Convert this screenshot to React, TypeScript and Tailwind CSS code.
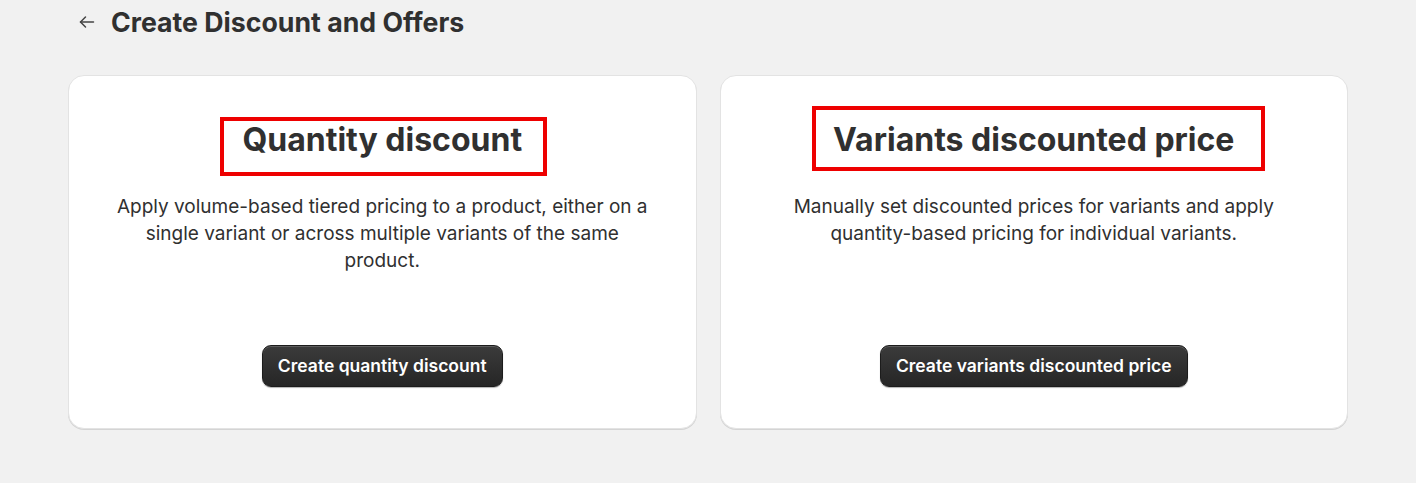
import React from "react";

function Card({ title, desc, button, box }: { title: string; desc: string; button: string; box: string }) {
  return (
    <div className="relative flex h-[354px] flex-col items-center rounded-[16px] border border-[#e3e3e3] bg-white px-[44px] pb-[41px] pt-[44px] shadow-[0_1px_0_#d4d4d4]">
      <div className="relative">
        <h2 className="text-[32px] font-bold leading-[40px] text-[#303030]">{title}</h2>
        <div className={"pointer-events-none absolute border-[4px] border-[#ee0000] " + box} />
      </div>
      <p className="mt-[33px] text-center text-[19px] leading-[27px] text-[#303030]">{desc}</p>
      <button className="mt-auto h-[42px] rounded-[9px] border border-[#1c1c1c] bg-gradient-to-b from-[#3b3b3b] to-[#262626] px-[15px] text-[17.5px] font-semibold text-white shadow-[inset_0_1px_0_rgba(255,255,255,0.18),0_1px_1px_rgba(0,0,0,0.3)]">
        {button}
      </button>
    </div>
  );
}

export default function App() {
  return (
    <div className="min-h-[483px] bg-[#f1f1f1] px-[68px] pt-[5px]" style={{ fontFamily: "Inter, 'Noto Sans', sans-serif" }}>
      <div className="flex h-[34px] items-center gap-[14px] pl-[9px]">
        <svg width="20" height="20" viewBox="0 0 20 20" fill="none" stroke="#444444" strokeWidth="1.5" strokeLinecap="round" strokeLinejoin="round">
          <path d="M16.5 10H3.5" />
          <path d="M8.5 5L3.5 10l5 5" />
        </svg>
        <h1 className="text-[26.7px] font-bold text-[#303030]">Create Discount and Offers</h1>
      </div>
      <div className="mt-[36px] grid grid-cols-2 gap-[23px]">
        <Card
          title="Quantity discount"
          desc="Apply volume-based tiered pricing to a product, either on a single variant or across multiple variants of the same product."
          button="Create quantity discount"
          box="-left-[22px] -right-[25px] -top-[3px] -bottom-[16px]"
        />
        <Card
          title="Variants discounted price"
          desc="Manually set discounted prices for variants and apply quantity-based pricing for individual variants."
          button="Create variants discounted price"
          box="-left-[21px] -right-[31px] -top-[14px] -bottom-[11px]"
        />
      </div>
    </div>
  );
}
